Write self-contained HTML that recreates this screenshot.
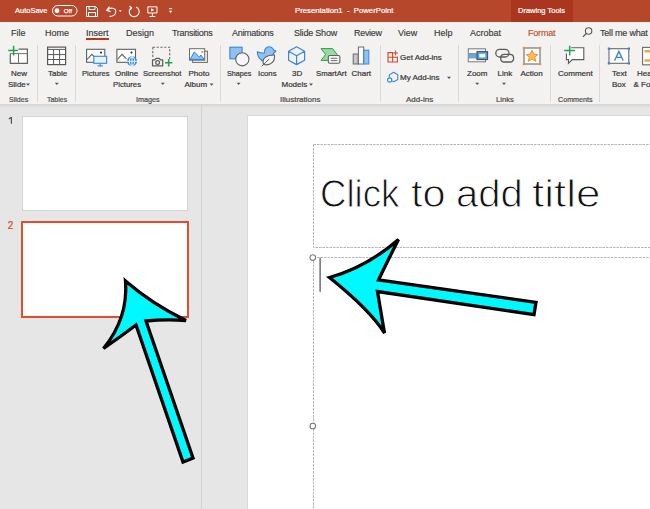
<!DOCTYPE html>
<html><head><meta charset="utf-8">
<style>
*{margin:0;padding:0;box-sizing:border-box}
html,body{width:650px;height:509px;overflow:hidden;background:#e6e6e6;font-family:"Liberation Sans",sans-serif;position:relative}
.a{position:absolute;white-space:nowrap;line-height:10px;transform-origin:0 0}
#title{left:0;top:0;width:650px;height:22px;background:#b7472a}
#dt{left:510.5px;top:0;width:62px;height:22px;background:#ab3620}
.wt{color:#fff;font-size:7.5px;-webkit-text-stroke:.2px #fff}
#tabs{left:0;top:22px;width:650px;height:20px;background:#f3f2f1}
.tab{font-size:9px;color:#3a3a3a;top:27.6px;-webkit-text-stroke:.15px #3a3a3a}
#ribbon{left:0;top:42px;width:650px;height:62px;background:#f3f2f1}
.lb{font-size:8px;color:#333;-webkit-text-stroke:.2px #333}
.r1{top:69px}.r2{top:79.5px}.gl{top:94.5px;color:#555}
.sep{top:45px;width:1px;height:57px;background:#d9d9d9}
#shadow{left:0;top:104px;width:650px;height:4px;background:linear-gradient(#d4d4d4,#e6e6e6)}
#div{left:201px;top:104px;width:1px;height:405px;background:#d2d2d2}
#s1{left:22px;top:116px;width:166px;height:95px;background:#fff;border:1px solid #d4d4d4}
#s2{left:21px;top:221px;width:168px;height:97px;background:#fff;border:2px solid #e44d2c}
#canvas{left:247px;top:115px;width:403px;height:394px;background:#fff;border-left:1px solid #d9d9d9;border-top:1px solid #d9d9d9}
.tt{top:173.2px;font-size:37px;line-height:40px;color:#111;-webkit-text-stroke:0.9px #fff}
</style></head><body>
<div class="a" id="title"></div>
<div class="a" id="dt"></div>
<div class="a wt" style="left:15px;top:6px">AutoSave</div>
<div class="a wt" style="left:295px;top:6px;transform:scaleX(1.03)">Presentation1&nbsp; -&nbsp; PowerPoint</div>
<div class="a wt" style="left:518px;top:6px">Drawing Tools</div>

<div class="a" id="tabs"></div>
<div class="a tab" style="left:11px">File</div>
<div class="a tab" style="left:45px">Home</div>
<div class="a tab" style="left:86px;color:#333">Insert</div>
<div class="a" style="left:86px;top:38px;width:23px;height:2px;background:#b8381c"></div>
<div class="a tab" style="left:126px">Design</div>
<div class="a tab" style="left:172px;letter-spacing:-0.3px">Transitions</div>
<div class="a tab" style="left:232px;letter-spacing:-0.3px">Animations</div>
<div class="a tab" style="left:294px;letter-spacing:-0.2px">Slide Show</div>
<div class="a tab" style="left:354px;letter-spacing:-0.3px">Review</div>
<div class="a tab" style="left:398px">View</div>
<div class="a tab" style="left:434px">Help</div>
<div class="a tab" style="left:470px">Acrobat</div>
<div class="a tab" style="left:528px;color:#c74b2a;-webkit-text-stroke:.15px #c74b2a;letter-spacing:-0.2px">Format</div>
<div class="a tab" style="left:600px;letter-spacing:-0.2px">Tell me what</div>

<div class="a" id="ribbon"></div>
<div class="a sep" style="left:37px"></div>
<div class="a sep" style="left:75px"></div>
<div class="a sep" style="left:220px"></div>
<div class="a sep" style="left:380px"></div>
<div class="a sep" style="left:458px"></div>
<div class="a sep" style="left:550px"></div>
<div class="a sep" style="left:599px"></div>
<div class="a lb r1" style="left:11px">New</div>
<div class="a lb r2" style="left:8px">Slide</div>
<div class="a lb gl" style="left:9px;transform:scaleX(.88)">Slides</div>
<div class="a lb r1" style="left:48px">Table</div>
<div class="a lb gl" style="left:46.5px;transform:scaleX(.87)">Tables</div>
<div class="a lb r1" style="left:82px;transform:scaleX(.95)">Pictures</div>
<div class="a lb r1" style="left:115px">Online</div>
<div class="a lb r2" style="left:112.5px;transform:scaleX(.97)">Pictures</div>
<div class="a lb r1" style="left:143px;transform:scaleX(.95)">Screenshot</div>
<div class="a lb r1" style="left:188.5px">Photo</div>
<div class="a lb r2" style="left:184.5px">Album</div>
<div class="a lb gl" style="left:135.5px;transform:scaleX(.9)">Images</div>
<div class="a lb r1" style="left:227px;transform:scaleX(.9)">Shapes</div>
<div class="a lb r1" style="left:257.5px;transform:scaleX(.97)">Icons</div>
<div class="a lb r1" style="left:292px">3D</div>
<div class="a lb r2" style="left:281.5px">Models</div>
<div class="a lb r1" style="left:315.5px;transform:scaleX(.97)">SmartArt</div>
<div class="a lb r1" style="left:351.5px">Chart</div>
<div class="a lb gl" style="left:280px">Illustrations</div>
<div class="a lb" style="left:400px;top:52.5px">Get Add-ins</div>
<div class="a lb" style="left:400px;top:73px">My Add-ins</div>
<div class="a lb gl" style="left:406px">Add-ins</div>
<div class="a lb r1" style="left:467px">Zoom</div>
<div class="a lb r1" style="left:497.5px">Link</div>
<div class="a lb r1" style="left:520.5px">Action</div>
<div class="a lb gl" style="left:495.5px;transform:scaleX(.95)">Links</div>
<div class="a lb r1" style="left:558px">Comment</div>
<div class="a lb gl" style="left:557.7px;transform:scaleX(.894)">Comments</div>
<div class="a lb r1" style="left:612px">Text</div>
<div class="a lb r2" style="left:612px">Box</div>
<div class="a lb r1" style="left:637px">Header</div>
<div class="a lb r2" style="left:633.5px">&amp; Footer</div>
<svg class="a" style="left:0;top:0" width="650" height="104" viewBox="0 0 650 104">
<!-- title bar -->
<g fill="none" stroke="#fff" stroke-width="1">
<rect x="52.5" y="5.5" width="24.5" height="10.5" rx="5.25"/>
<path d="M86.5,6.5H95.5L97.5,8.5V16.5H86.5Z M89,6.5V9.5H95V6.5 M88.5,16.5V12.5H95.5V16.5"/>
<path d="M107,10.2C110,7 115.8,7.6 115.8,11.8C115.8,15 112.5,16.6 109.5,16.4" stroke-width="1.1"/>
<path d="M109.5,6.6L106.6,10.4L110.6,11.6" stroke-width="1.1"/>
<path d="M131.3,7.6A5,5 0 1 0 136,7" stroke-width="1.1"/>
<path d="M129.5,6.2L131.6,7.7L130.4,10" stroke-width="1.1"/>
<path d="M147.8,6.8H157V13H147.8Z M152.4,13V16.3 M149.5,16.5H155.3"/>
<path d="M169,8.7H172.2"/>
</g>
<circle cx="57" cy="10.75" r="2.4" fill="#fff"/>
<text x="63.8" y="13.2" font-size="6.2" fill="#fff" stroke="#fff" stroke-width=".25" font-family="Liberation Sans">Off</text>
<path d="M151,8.3L154.3,9.9L151,11.5Z" fill="#fff"/>
<path d="M118.8,10.3H121.8L120.3,12Z M168.9,10.8H172.3L170.6,12.9Z" fill="#fff"/>
<!-- New slide -->
<g fill="none">
<path d="M18.5,49.2H27.4V63.3H10.3V53.6" fill="#fff" stroke="#626262" stroke-width="1.2"/>
<path d="M10.3,53.6H27.4M18.5,53.6V63.3" stroke="#707070" stroke-width="1"/>
<path d="M13.6,45.7V55.5M8.2,50.5H18" stroke="#22a54a" stroke-width="1.5"/>
<!-- Table -->
<rect x="47.6" y="47.1" width="18" height="17.5" fill="#fff" stroke="#555" stroke-width="1.2"/>
<path d="M47.6,49.4H65.6M47.6,54.6H65.6M47.6,59.5H65.6M53.6,49.4V64.6M59.6,49.4V64.6" stroke="#585858" stroke-width="1"/>
</g>
<!-- Pictures -->
<g fill="none" stroke="#5f5f5f" stroke-width="1.1">
<rect x="86.6" y="49.3" width="18.2" height="13" fill="#fff"/>
<path d="M87,59.5L91.8,54.3L96,58.5"/>
<rect x="116.9" y="49.3" width="18.6" height="13" fill="#fff"/>
<path d="M117.3,59.5L122,54.3L126.5,58.8"/>
</g>
<circle cx="101" cy="52.6" r="1.1" fill="#333"/>
<circle cx="131.5" cy="52.6" r="1.1" fill="#333"/>
<rect x="93.8" y="56.3" width="12.8" height="7" fill="#eaf3fc" stroke="#3a8ee0" stroke-width="1.2"/>
<path d="M100.2,63.3V65.6M97.6,65.9H102.8" stroke="#3a8ee0" stroke-width="1.2" fill="none"/>
<circle cx="132" cy="61.3" r="5" fill="#3a8ee0"/>
<path d="M127,61.3H137M132,56.3V66.3" stroke="#fff" stroke-width=".9" fill="none"/>
<ellipse cx="132" cy="61.3" rx="2.6" ry="4.2" fill="none" stroke="#fff" stroke-width=".9"/>
<!-- Screenshot -->
<path d="M152.8,47.2H169.7V59.5M152.8,47.2V57" fill="none" stroke="#6a6a6a" stroke-width="1.1" stroke-dasharray="2.2,1.6"/>
<path d="M152.5,59.8H154.8L156,58.3H159.2L160.4,59.8H162.7V65.8H152.5Z" fill="#f3f2f1" stroke="#5c5c5c" stroke-width="1.2" stroke-linejoin="round"/>
<circle cx="157.6" cy="62.6" r="1.9" fill="none" stroke="#5c5c5c" stroke-width="1.2"/>
<path d="M168.7,59V66.5M165,62.7H172.4" stroke="#22a54a" stroke-width="1.6" fill="none"/>
<!-- Photo album -->
<rect x="192.6" y="51.2" width="14.8" height="11.2" fill="#f3f2f1" stroke="#6a6a6a" stroke-width="1"/>
<rect x="189.5" y="48.7" width="15.2" height="11.5" fill="#fff" stroke="#6a6a6a" stroke-width="1"/>
<path d="M190.2,59.4L194.3,51.9L199.5,57.3L200.8,55L204.2,59.4Z" fill="#8ec5f2" stroke="#2f7fd0" stroke-width="1" stroke-linejoin="round"/>
<rect x="201.3" y="51" width="1.9" height="1.9" fill="#f0902f"/>
<!-- Shapes -->
<rect x="229.9" y="47.2" width="12.2" height="11.6" fill="#8cc3f2" stroke="#3a86d6" stroke-width="1.1"/>
<circle cx="242.3" cy="59.3" r="6.6" fill="#f7f7f7" stroke="#5f5f5f" stroke-width="1.1"/>
<!-- Icons -->
<path d="M257.3,51.8C259.5,52.5 262,53.2 264.5,53C264,49.5 266,46.8 269,46.8C271.5,46.8 273,48.5 273.6,50L276,51L273.5,53.5C273,55.5 271,57.5 268,58.5L262,60.8C259,58.5 257.3,55.5 257.3,51.8Z" fill="#8ec2f0" stroke="#3a86d6" stroke-width="1.1" stroke-linejoin="round"/>
<path d="M263.5,64.3C261.5,58.5 266.5,54.8 274.4,55C275.5,61.5 270,66.5 263.5,64.3Z" fill="#f7f7f7" stroke="#5a5a5a" stroke-width="1.1"/>
<path d="M261.6,66.4L269.2,59" stroke="#5a5a5a" stroke-width="1" fill="none"/>
<!-- 3D -->
<path d="M296.6,46.8L304.6,51.3V60.2L296.6,64.6L288.6,60.2V51.3Z M288.6,51.3L296.6,55.8L304.6,51.3 M296.6,55.8V64.6" fill="none" stroke="#3a86d6" stroke-width="1.2" stroke-linejoin="round"/>
<!-- SmartArt -->
<path d="M321,48.6H332.5L337.3,54.6L332.5,60.4H321L325.6,54.6Z" fill="#95dba3" stroke="#2f9e4a" stroke-width="1"/>
<rect x="328.3" y="55.5" width="11.6" height="7.8" rx="1.5" fill="#f7f7f7" stroke="#5f5f5f" stroke-width="1.1"/>
<path d="M330.8,58.3H337.4M330.8,60.6H337.4" stroke="#5f5f5f" stroke-width=".9"/>
<!-- Chart -->
<rect x="353.2" y="54" width="5" height="10" fill="#c8c8c8" stroke="#6a6a6a" stroke-width="1"/>
<rect x="358.4" y="47" width="5.3" height="17" fill="#fff" stroke="#6a6a6a" stroke-width="1"/>
<rect x="363.8" y="50.2" width="5" height="13.8" fill="#8cc3f2" stroke="#3a86d6" stroke-width="1"/>
<!-- Get add-ins -->
<path d="M388,52.6H392.6V62H388Z M388,57.3H397.4V62H392.6 M397.4,57.3V56.4" fill="none" stroke="#d24726" stroke-width="1.1"/>
<path d="M395.6,50.6V55.4M393.2,53H398" fill="none" stroke="#d24726" stroke-width="1"/>
<!-- My add-ins -->
<path d="M389.3,77.2V74.9L393.6,72.3L397.8,74.8V79.4L393.6,81.7L392.3,81" fill="none" stroke="#3a86d6" stroke-width="1.1" stroke-linejoin="round"/>
<circle cx="389.7" cy="80" r="2.1" fill="#fff" stroke="#3a86d6" stroke-width="1.1"/>
<!-- Zoom -->
<rect x="468.3" y="48.8" width="17.2" height="13" fill="#f7f7f7" stroke="#7a7a7a" stroke-width="1"/>
<rect x="469" y="54" width="8" height="3.6" fill="#5aaee8"/>
<path d="M469,53.6H476L477.5,52.2M469,57.9H476L477.5,59.3" fill="none" stroke="#7a7a7a" stroke-width=".9"/>
<rect x="477" y="51.6" width="10.6" height="8" fill="#49a0e6" stroke="#4a4a4a" stroke-width="1"/>
<rect x="479.3" y="53.8" width="6" height="3.6" fill="#fff"/>
<!-- Link -->
<rect x="495.8" y="49.4" width="13.2" height="7.6" rx="3.8" fill="none" stroke="#5a5a5a" stroke-width="1.3"/>
<path d="M505.5,54.4H510C512.2,54.4 513.6,56.1 513.6,58.2C513.6,60.3 512.2,62 510,62H504.3C502.1,62 500.7,60.3 500.7,58.2C500.7,56.1 502.1,54.4 504.3,54.4H508" fill="none" stroke="#5a5a5a" stroke-width="1.3"/>
<!-- Action -->
<rect x="524" y="48" width="16" height="16" fill="#fafafa" stroke="#6a6a6a" stroke-width="1.1"/>
<path d="M532,50.3L533.7,54.2L537.8,54.5L534.7,57.2L535.7,61.3L532,59.1L528.3,61.3L529.3,57.2L526.2,54.5L530.3,54.2Z" fill="#fbbf4a" stroke="#e8892b" stroke-width=".9" stroke-linejoin="round"/>
<g fill="#f0902f"><rect x="522.8" y="46.8" width="2.2" height="2.2"/><rect x="539" y="46.8" width="2.2" height="2.2"/><rect x="522.8" y="63" width="2.2" height="2.2"/><rect x="539" y="63" width="2.2" height="2.2"/></g>
<!-- Comment -->
<path d="M571.3,47.8H583.8V59.6H572.3L568.4,63.3L568.6,59.6H566.4V53.5" fill="#fff" stroke="#5a5a5a" stroke-width="1.1"/>
<path d="M569.7,45.8V55.5M564.2,50.5H575.1" stroke="#22a54a" stroke-width="1.5"/>
<!-- Text box -->
<rect x="609" y="48.7" width="19.8" height="14.6" fill="#fff" stroke="#6a6a6a" stroke-width="1.1"/>
<g fill="#3a86d6"><rect x="607.8" y="47.5" width="2.3" height="2.3"/><rect x="627.7" y="47.5" width="2.3" height="2.3"/><rect x="607.8" y="62.2" width="2.3" height="2.3"/><rect x="627.7" y="62.2" width="2.3" height="2.3"/></g>
<path d="M614.6,60.6L618.9,51.4L623.2,60.6M616.2,57.4H621.6" fill="none" stroke="#3a86d6" stroke-width="1.3"/>
<!-- Header footer -->
<rect x="642.6" y="47.4" width="12" height="17.4" fill="#fff" stroke="#6a6a6a" stroke-width="1.1"/>
<path d="M644.6,51.2H652M644.6,60.5H652" stroke="#f2a93b" stroke-width="2.4"/>
<circle cx="588.6" cy="31" r="3.2" fill="none" stroke="#555" stroke-width="1.1"/>
<path d="M586.3,33.4L583,36.9" stroke="#555" stroke-width="1.3"/>
<!-- dropdown arrows -->
<g fill="#555">
<path d="M26,83.5H30L28,85.7Z M54.8,82.8H58.8L56.8,85.0Z M160.8,82.8H164.8L162.8,85.0Z M209.6,83.5H213.6L211.6,85.7Z M236.6,82.8H240.6L238.6,85.0Z M309,83.5H313L311,85.7Z M447,76.8H451L449,79.0Z M475.2,82.8H479.2L477.2,85.0Z M502,82.8H506L504,85.0Z"/>
</g>
</svg>
<div class="a" id="shadow"></div>
<div class="a" id="div"></div>
<div class="a" id="s1"></div>
<div class="a" id="s2"></div>
<svg class="a" style="left:0;top:110px" width="20" height="20"><path d="M11.4,7V13.8M11.4,7.2L8.8,9" stroke="#505050" stroke-width="1.2" fill="none"/></svg>
<div class="a" style="left:7.8px;top:220.5px;font-size:10px;color:#d0502e;-webkit-text-stroke:.2px #d0502e">2</div>
<div class="a" id="canvas"></div>
<svg class="a" style="left:0;top:0" width="650" height="509" viewBox="0 0 650 509">
<g fill="none" stroke="#b4b4b4" stroke-width="1" stroke-dasharray="2.5,1">
<path d="M313.5,144.5H651M313.5,144.5V247.5H651"/>
<path d="M313.5,257.5H651M313.5,257.5V510"/>
</g>
<circle cx="312.8" cy="257.6" r="2.8" fill="#fff" stroke="#7a7a7a" stroke-width="1.1"/>
<circle cx="312.8" cy="426" r="2.8" fill="#fff" stroke="#7a7a7a" stroke-width="1.1"/>
<rect x="319.5" y="257.8" width="1.2" height="34" fill="#4a4a4a"/>
<g fill="#00f8ff" stroke="#000" stroke-width="3.3" stroke-linejoin="miter" stroke-miterlimit="4.5">
<path d="M329.5,277.5 Q367,267 398.5,239.5 Q387,262 378.5,280 L536,302.3 L534,314.6 L377.5,291.5 Q381,313 384.5,333 Q370,310 329.5,277.5Z"/>
<path d="M125.5,281 Q152,304 186,320.5 Q165,319 146,321 L193,458 L183,462 L136,325 Q120,337 103.5,348.5 Q128.4,318 125.5,281Z"/>
</g>
</svg>
<div class="a tt" style="left:319.5px;transform:scale(.99,1.07)">Click</div>
<div class="a tt" style="left:411px;transform:scale(1.12,1.07)">to</div>
<div class="a tt" style="left:456px;transform:scale(1.08,1.07)">add</div>
<div class="a tt" style="left:531.5px;transform:scale(1.19,1.07)">title</div>
</body></html>
